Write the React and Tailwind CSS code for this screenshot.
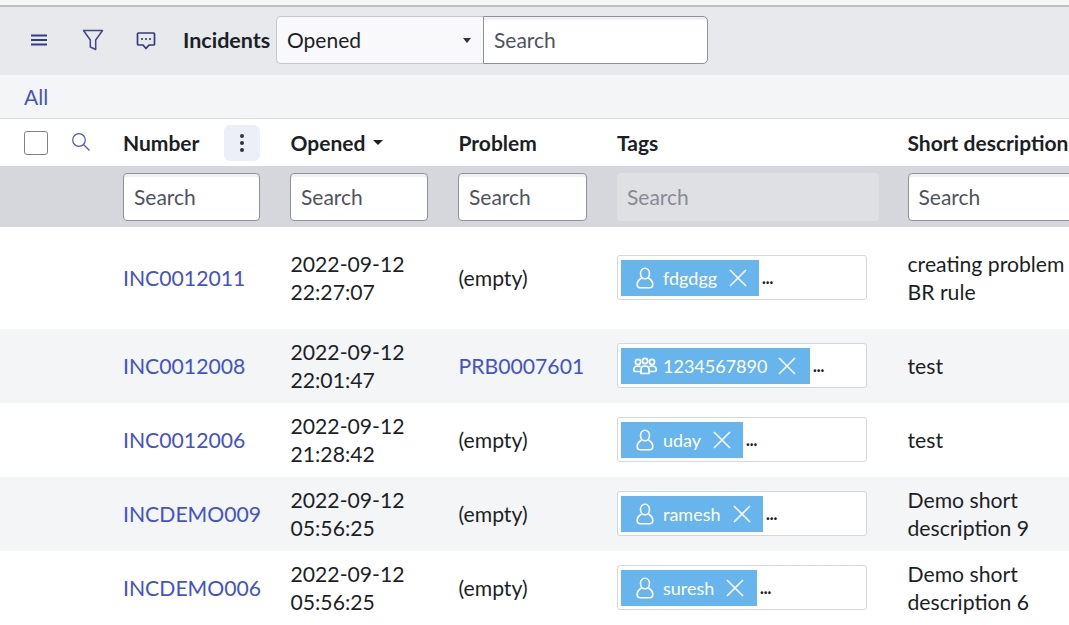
const gridCols = 'grid grid-cols-[123px_167.500px_168.500px_158px_291px_200px] w-[1108px]'

const rows = [
  { id: 'INC0012011', date: '2022-09-12', time: '22:27:07', problem: null, tag: 'fdgdgg', tagW: 'w-[138px]', desc: ['creating problem through', 'BR rule'], h: 'h-[102px]' },
  { id: 'INC0012008', date: '2022-09-12', time: '22:01:47', problem: 'PRB0007601', tag: '1234567890', group: true, tagW: 'w-[189px]', desc: ['test'], h: 'h-[74px]', alt: true },
  { id: 'INC0012006', date: '2022-09-12', time: '21:28:42', problem: null, tag: 'uday', tagW: 'w-[122px]', desc: ['test'], h: 'h-[74px]' },
  { id: 'INCDEMO009', date: '2022-09-12', time: '05:56:25', problem: null, tag: 'ramesh', tagW: 'w-[142px]', desc: ['Demo short', 'description 9'], h: 'h-[74px]', alt: true },
  { id: 'INCDEMO006', date: '2022-09-12', time: '05:56:25', problem: null, tag: 'suresh', tagW: 'w-[136px]', desc: ['Demo short', 'description 6'], h: 'h-[74px]' },
]

function MenuIcon() {
  return (
    <svg width="18" height="14" viewBox="0 0 18 14" fill="none" stroke="#343b7c" strokeWidth="1.800">
      <path d="M1 2.500h16M1 7h16M1 11.500h16" />
    </svg>
  )
}

function FilterIcon() {
  return (
    <svg width="22" height="22" viewBox="0 0 22 22" fill="none" stroke="#3f4785" strokeWidth="1.500" strokeLinejoin="round">
      <path d="M1.500 1.500h19l-6.800 9.500v9.500l-5.400-2.500V11z" />
    </svg>
  )
}

function ChatIcon() {
  return (
    <svg width="20" height="20" viewBox="0 0 20 20" fill="none" stroke="#343b7c" strokeWidth="1.700" strokeLinejoin="round">
      <path d="M2.500 2h15a1 1 0 0 1 1 1v10a1 1 0 0 1-1 1H13L10 17.500 7 14H2.500a1 1 0 0 1-1-1V3a1 1 0 0 1 1-1z" />
      <circle cx="6" cy="8" r="1.100" fill="#343b7c" stroke="none" />
      <circle cx="10" cy="8" r="1.100" fill="#343b7c" stroke="none" />
      <circle cx="14" cy="8" r="1.100" fill="#343b7c" stroke="none" />
    </svg>
  )
}

function SearchIcon() {
  return (
    <svg width="20" height="20" viewBox="0 0 20 20" fill="none" stroke="#4f57b0" strokeWidth="1.200">
      <circle cx="8" cy="8" r="6.300" />
      <path d="M12.500 12.500l6 6" />
    </svg>
  )
}

function UserIcon() {
  return (
    <svg width="18" height="22" viewBox="0 0 18 22" fill="none" stroke="white" strokeWidth="1.600" strokeLinejoin="round">
      <ellipse cx="9" cy="6.500" rx="4.500" ry="5.300" />
      <path d="M5.500 11C3 12.500 1.200 14.500 1.200 17.500c0 2 1 3.300 3 3.300h9.600c2 0 3-1.300 3-3.300 0-3-1.800-5-4.300-6.500" />
    </svg>
  )
}

function GroupIcon() {
  return (
    <svg width="24" height="18" viewBox="0 0 24 18" fill="none" stroke="white" strokeWidth="1.700" strokeLinejoin="round">
      <circle cx="12" cy="4" r="2.600" />
      <circle cx="5" cy="5" r="2.600" />
      <circle cx="19" cy="5" r="2.600" />
      <path d="M8 16.500v-4c0-2 1.500-3.500 4-3.500s4 1.500 4 3.500v4z" />
      <path d="M8 14.500H2.500c-1 0-1.800-.7-1.800-1.800 0-2 1.800-3.700 4.300-3.700 1 0 1.800.2 2.600.7" />
      <path d="M16 14.500h5.500c1 0 1.800-.7 1.800-1.800 0-2-1.800-3.700-4.300-3.700-1 0-1.800.2-2.600.7" />
    </svg>
  )
}

function CloseIcon() {
  return (
    <svg width="18" height="18" viewBox="0 0 18 18" fill="none" stroke="white" strokeWidth="1.600">
      <path d="M1 1l16 16M17 1L1 17" />
    </svg>
  )
}

function SearchBox({ className = '', disabled }) {
  return (
    <div className={`h-[48px] flex items-center px-[10px] rounded-[4px] text-[21px] ${disabled ? 'bg-[#dfe0e4] text-[#878b94]' : 'bg-white border border-[#8e9199] text-[#4f5360] shadow-[inset_0_3px_0_#eff0f2]'} ${className}`}>
      Search
    </div>
  )
}

function Row({ row }) {
  return (
    <div className={`${gridCols} ${row.h} items-center text-[21.200px] leading-[28px] text-[#1c1f26] ${row.alt ? 'bg-[#f4f5f7]' : 'bg-white'}`}>
      <div />
      <a className="text-[#4353c6]">{row.id}</a>
      <div>{row.date}<br />{row.time}</div>
      {row.problem ? <a className="text-[#4353c6] -ml-[0.500px]">{row.problem}</a> : <div className="-ml-[0.500px]">(empty)</div>}
      <div className="w-[250px] h-[45px] -mt-[1px] bg-white border border-[#d5d6da] rounded-[3px] flex items-center pl-[3px] overflow-hidden">
        <div className={`${row.tagW} h-[36px] shrink-0 bg-[#68b4ed] flex items-center text-white text-[18px] ${row.group ? 'pl-[12px] gap-[6px]' : 'pl-[15px] gap-[9px]'}`}>
          {row.group ? <GroupIcon /> : <UserIcon />}
          <span>{row.tag}</span>
          <span className={row.group ? 'ml-[5px]' : 'ml-[3px]'}><CloseIcon /></span>
        </div>
        <span className="ml-[3px] text-[16px] font-black leading-none">...</span>
      </div>
      <div className="whitespace-nowrap -ml-[0.500px]">{row.desc.map((line) => <div key={line}>{line}</div>)}</div>
    </div>
  )
}

export default function App() {
  return (
    <div className="w-[1069px] h-[625px] overflow-hidden bg-white font-['Lato','Liberation_Sans',sans-serif]">
      <div className="h-[5px] bg-[#f6f6f7]" />
      <div className="h-[2px] bg-[#bfc0c3]" />

      {/* Toolbar */}
      <div className="h-[68px] bg-[#e8e9ec] flex items-center pb-[2px]">
        <div className="ml-[30px] w-[52px]"><MenuIcon /></div>
        <div className="w-[54px]"><FilterIcon /></div>
        <div className="w-[47px] pt-[1px]"><ChatIcon /></div>
        <span className="text-[21.500px] font-bold text-[#1c1f26] w-[93px] whitespace-nowrap">Incidents</span>
        <div className="w-[207px] h-[48px] bg-[#f9f9fb] border border-[#c5c7cc] border-r-0 rounded-l-[5px] flex items-center pl-[10px] pr-[12px] text-[21px] text-[#1c1f26]">
          <span className="flex-1">Opened</span>
          <span className="w-0 h-0 border-x-[4px] border-x-transparent border-t-[5px] border-t-[#2e3138]" />
        </div>
        <div className="w-[225px] h-[48px] bg-white border border-[#8e9199] rounded-r-[5px] flex items-center pl-[10px] text-[21px] text-[#4f5360] shadow-[inset_0_3px_0_#eff0f2]">Search</div>
      </div>

      {/* Breadcrumb */}
      <div className="h-[43px] bg-[#f4f5f7] flex items-center pl-[24px] text-[21px] text-[#4353c6]">All</div>
      <div className="h-[1px] bg-[#d9dadd]" />

      {/* Header */}
      <div className={`${gridCols} h-[47px] items-center bg-white text-[21px] font-bold text-[#1c1f26]`}>
        <div className="flex items-center pl-[24px]">
          <div className="w-[24px] h-[24px] border border-[#7f828a] rounded-[3px]" />
          <div className="ml-[23px] -mt-[2px]"><SearchIcon /></div>
        </div>
        <div className="flex items-center">
          <span className="w-[101px]">Number</span>
          <span className="w-[36px] h-[36px] rounded-[6px] bg-[#eceef8] flex flex-col items-center justify-center gap-[3px]">
            <i className="w-[4px] h-[4px] rounded-full bg-[#2f3340]" />
            <i className="w-[4px] h-[4px] rounded-full bg-[#2f3340]" />
            <i className="w-[4px] h-[4px] rounded-full bg-[#2f3340]" />
          </span>
        </div>
        <div className="flex items-center gap-[8px]">
          Opened
          <span className="w-0 h-0 border-x-[5px] border-x-transparent border-t-[5px] border-t-[#1c1f26]" />
        </div>
        <div className="-ml-[0.500px]">Problem</div>
        <div>Tags</div>
        <div className="whitespace-nowrap -ml-[0.500px]">Short description</div>
      </div>

      {/* Column search */}
      <div className={`${gridCols} h-[61px] items-center bg-[#d5d7dc]`}>
        <div />
        <SearchBox className="w-[137px]" />
        <SearchBox className="w-[138px] -ml-[0.500px]" />
        <SearchBox className="w-[129px] -ml-[1px]" />
        <SearchBox className="w-[262px]" disabled />
        <SearchBox className="w-[200px] -ml-[0.500px]" />
      </div>

      {rows.map((row) => <Row key={row.id} row={row} />)}
    </div>
  )
}
